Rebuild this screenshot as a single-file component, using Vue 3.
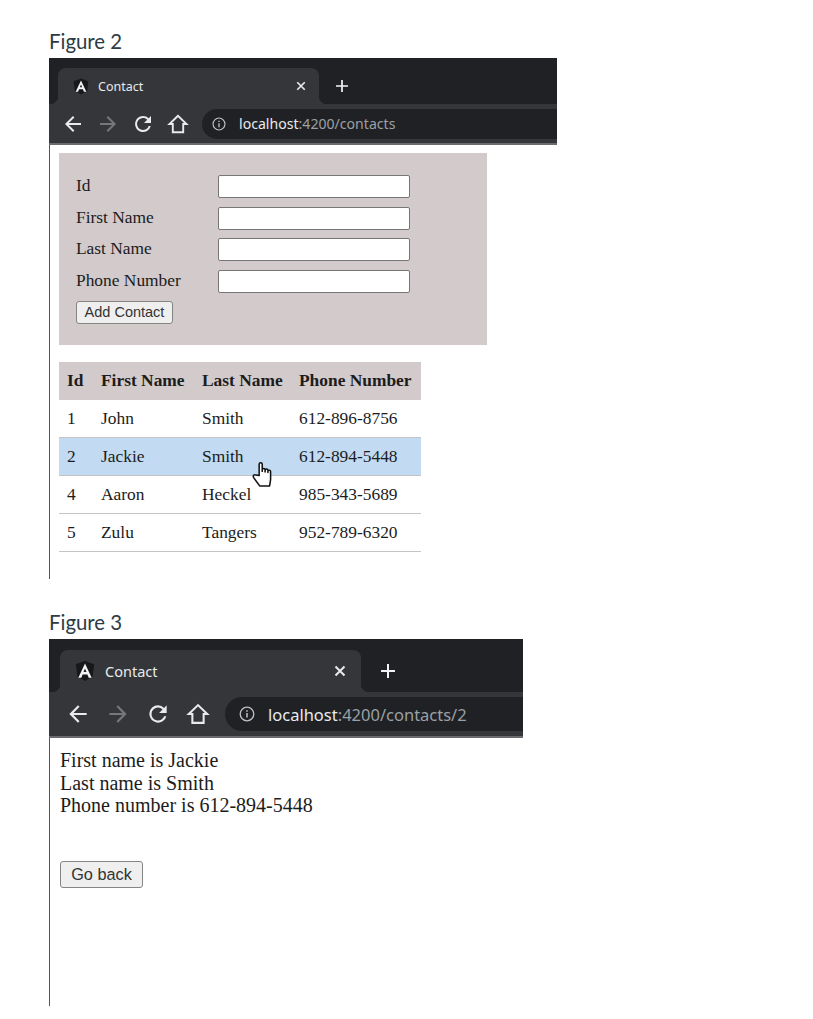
<script setup>
const contacts = [
  { id: 1, first: 'John', last: 'Smith', phone: '612-896-8756' },
  { id: 2, first: 'Jackie', last: 'Smith', phone: '612-894-5448', active: true },
  { id: 4, first: 'Aaron', last: 'Heckel', phone: '985-343-5689' },
  { id: 5, first: 'Zulu', last: 'Tangers', phone: '952-789-6320' }
]
const fields = ['Id', 'First Name', 'Last Name', 'Phone Number']
const browsers = {
  list: { cls: 'small', path: ':4200/contacts' },
  detail: { cls: 'large', path: ':4200/contacts/2' }
}
</script>

<template>
  <main class="page">
    <section v-for="(b, key) in browsers" :key="key" class="figure" :class="b.cls">
      <h2 class="title">Figure {{ key === 'list' ? 2 : 3 }}</h2>
      <div class="chrome">
        <div class="strip">
          <div class="tab">
            <svg class="logo" viewBox="0 0 24 24">
              <path d="M12 0 1 4l1.8 14.6L12 24l9.2-5.4L23 4z" fill="#17181a" />
              <path d="M12 3 4 20h3.6l1.5-3.8h5.8L16.4 20H20zM10.3 13.3 12 9l1.7 4.3z" fill="#f1f3f4" fill-rule="evenodd" />
            </svg>
            <span class="tab-label">Contact</span>
            <svg class="close" viewBox="0 0 12 12"><path d="M1.5 1.5l9 9m0-9l-9 9" stroke="#e8eaed" stroke-width="2" fill="none" /></svg>
          </div>
          <svg class="plus" viewBox="0 0 14 14"><path d="M7 0v14M0 7h14" stroke="#f1f3f4" stroke-width="2" fill="none" /></svg>
        </div>
        <div class="toolbar">
          <svg class="nav" viewBox="0 0 24 24"><path fill="#e8eaed" d="M20 11H7.83l5.59-5.59L12 4l-8 8 8 8 1.41-1.41L7.83 13H20z" /></svg>
          <svg class="nav" viewBox="0 0 24 24"><path fill="#75777a" d="M4 11h12.17l-5.59-5.59L12 4l8 8-8 8-1.41-1.41L16.17 13H4z" /></svg>
          <svg class="nav" viewBox="0 0 24 24"><path fill="#e8eaed" d="M17.65 6.35A7.95 7.95 0 0 0 12 4a8 8 0 1 0 7.75 10h-2.08A6 6 0 1 1 12 6c1.66 0 3.14.69 4.22 1.78L13 11h7V4z" /></svg>
          <svg class="nav" viewBox="0 0 24 24"><path fill="none" stroke="#e8eaed" stroke-width="1.9" d="M12 3.8 3.5 12H6.8v8.2h10.4V12h3.3z" /></svg>
          <div class="omnibox">
            <svg class="info" viewBox="0 0 16 16">
              <circle cx="8" cy="8" r="6.8" fill="none" stroke="#bdc1c6" stroke-width="1.3" />
              <path d="M8 7v4.6M8 4.2v1.6" stroke="#bdc1c6" stroke-width="1.5" fill="none" />
            </svg>
            <span class="url"><span class="host">localhost</span>{{ b.path }}</span>
          </div>
        </div>
      </div>

      <div v-if="key === 'list'" class="content">
        <form class="panel">
          <div v-for="f in fields" :key="f" class="field">
            <label>{{ f }}</label>
            <input type="text" />
          </div>
          <button type="button" class="add">Add Contact</button>
        </form>
        <div class="table-wrap">
          <table>
            <colgroup>
              <col class="c-id" /><col class="c-first" /><col class="c-last" /><col class="c-phone" />
            </colgroup>
            <thead>
              <tr><th>Id</th><th>First Name</th><th>Last Name</th><th>Phone Number</th></tr>
            </thead>
            <tbody>
              <tr v-for="c in contacts" :key="c.id" :class="{ active: c.active }">
                <td>{{ c.id }}</td><td>{{ c.first }}</td><td>{{ c.last }}</td><td>{{ c.phone }}</td>
              </tr>
            </tbody>
          </table>
          <svg class="cursor" viewBox="0 0 20 24" preserveAspectRatio="none">
            <path fill="#fff" stroke="#111" stroke-width="1.4" stroke-linejoin="round" d="M6.5 13V2.2a1.4 1.4 0 0 1 2.8 0V9V7.5a1.3 1.3 0 0 1 2.6 0V9.5V8a1.3 1.3 0 0 1 2.6 0V10V9a1.2 1.2 0 0 1 2.4 0V17L16 23H7L1.5 15C.5 13 2 11.5 3.5 12.5z" />
          </svg>
        </div>
      </div>

      <div v-else class="content detail">
        <p class="lines">First name is Jackie<br />Last name is Smith<br />Phone number is 612-894-5448</p>
        <button type="button" class="back">Go back</button>
      </div>
    </section>
  </main>
</template>

<style scoped>
.page {
  padding: 29px 0 0 49px;
  display: flex;
  flex-direction: column;
  gap: 31px;
  font-family: "Liberation Serif", serif;
  color: #1c1c1c;
}
.title {
  margin: 0 0 5px;
  font: 400 20.4px/24px Lato, sans-serif;
  color: #2d3b45;
}
.chrome { background: #35363a; }
.small .chrome { width: 508px; }
.large .chrome { width: 474px; }
.strip {
  display: flex;
  align-items: flex-end;
  background: #202124;
  font-family: "Noto Sans", sans-serif;
}
.small .strip { height: 46px; padding-left: 9px; }
.large .strip { height: 53px; padding-left: 11px; }
.tab {
  position: relative;
  display: flex;
  align-items: center;
  background: #35363a;
  color: #e8eaed;
  border-radius: 8px 8px 0 0;
  box-sizing: border-box;
}
.tab::before,
.tab::after {
  content: "";
  position: absolute;
  bottom: 0;
  width: 8px;
  height: 8px;
}
.tab::before {
  left: -8px;
  background: radial-gradient(circle at 0 0, #202124 8px, #35363a 8.5px);
}
.tab::after {
  right: -8px;
  background: radial-gradient(circle at 100% 0, #202124 8px, #35363a 8.5px);
}
.small .tab { width: 261px; height: 36px; padding: 0 13px 0 15px; font-size: 12.5px; }
.large .tab { width: 301px; height: 42px; padding: 0 15px 0 15px; font-size: 14.5px; }
.logo { flex: none; }
.small .logo { width: 16px; height: 17px; }
.large .logo { width: 20px; height: 20px; }
.small .tab-label { margin-left: 9px; }
.large .tab-label { margin-left: 10px; }
.close { flex: none; margin-left: auto; }
.small .close { width: 10px; height: 10px; }
.large .close { width: 12px; height: 12px; }
.plus { flex: none; align-self: center; }
.small .plus { width: 12px; height: 12px; margin: 9px 0 0 17px; }
.large .plus { width: 14px; height: 14px; margin: 11px 0 0 20px; }
.toolbar {
  display: flex;
  align-items: center;
  border-bottom: 2px solid #6a6b6e;
  font-family: "Noto Sans", sans-serif;
}
.small .toolbar { height: 39px; padding-left: 12px; gap: 11px; }
.large .toolbar { height: 44px; padding-left: 16px; gap: 14px; }
.nav { flex: none; }
.small .nav { width: 24px; height: 24px; }
.large .nav { width: 26px; height: 26px; }
.omnibox {
  flex: 1;
  display: flex;
  align-items: center;
  background: #202124;
  color: #9aa0a6;
}
.small .omnibox { height: 30px; margin-left: 1px; padding-left: 10px; border-radius: 15px 0 0 15px; font-size: 14.1px; }
.large .omnibox { height: 34px; padding-left: 14px; border-radius: 17px 0 0 17px; font-size: 16.5px; }
.info { flex: none; }
.small .info { width: 14px; height: 14px; margin-right: 13px; }
.large .info { width: 16px; height: 16px; margin-right: 13px; }
.host { color: #e8eaed; }
.content { border-left: 1px solid #555; box-sizing: border-box; }
.small .content { height: 434px; padding: 8px 0 0 9px; }
.large .content { height: 268px; padding: 11px 0 0 10px; }
.panel {
  width: 428px;
  height: 192px;
  box-sizing: border-box;
  padding: 22px 0 0 17px;
  background: #d2cacb;
  display: flex;
  flex-direction: column;
  align-items: flex-start;
  gap: 8.5px;
  font-size: 17.4px;
}
.field { display: flex; align-items: center; height: 23px; }
.field label { width: 142px; padding-bottom: 2px; }
.field input {
  width: 192px;
  height: 23px;
  box-sizing: border-box;
  border: 1px solid #767676;
  border-radius: 2px;
  background: #fff;
  padding: 0;
}
button {
  font-family: "Liberation Sans", sans-serif;
  background: #efefef;
  border: 1px solid #858585;
  border-radius: 3px;
  padding: 0 0 1px;
  color: #333;
}
.add { width: 97px; height: 23px; font-size: 14.5px; }
.table-wrap { position: relative; margin-top: 17px; width: 362px; }
table {
  width: 362px;
  table-layout: fixed;
  border-collapse: separate;
  border-spacing: 0;
  font-size: 17.4px;
}
.c-id { width: 34px; }
.c-first { width: 101px; }
.c-last { width: 97px; }
.c-phone { width: 130px; }
th, td { height: 38px; padding: 0 0 0 8px; text-align: left; box-sizing: border-box; white-space: nowrap; }
th { background: #d2cacb; padding-bottom: 2px; }
td { border-bottom: 1px solid #c4c4c4; }
.active td { background: #c2dbf2; }
.cursor {
  position: absolute;
  left: 193px;
  top: 100px;
  width: 22px;
  height: 25px;
}
.lines { margin: 0; font-size: 20px; line-height: 22.5px; }
.back { display: block; width: 83px; height: 27px; margin-top: 44.5px; font-size: 16.3px; }
</style>

<style>
body { background: #fff; }
</style>
